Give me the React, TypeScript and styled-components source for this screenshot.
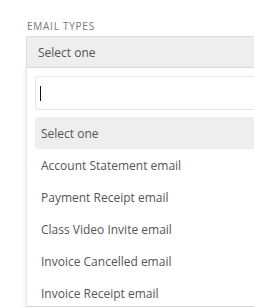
import styled, { createGlobalStyle } from 'styled-components';

/* —— tokens —— */
const txtMain = '#555';
const txtLabel = '#777';
const line = '#dcdcdc';
const fill = '#eeeeee';

const Global = createGlobalStyle`
  html, body {
    margin: 0;
    background: #fff;
    overflow: hidden;
  }
  body {
    font-family: "Open Sans", "Liberation Sans", sans-serif;
  }
`;

const options = [
  'Select one',
  'Account Statement email',
  'Payment Receipt email',
  'Class Video Invite email',
  'Invoice Cancelled email',
  'Invoice Receipt email',
];

/* —— field shell (runs off the right edge, like the crop) —— */
const Field = styled.div`
  padding: 20px 0 0 26px;
`;

const Label = styled.div`
  font-size: 10px;
  line-height: 12px;
  letter-spacing: 0.75px;
  text-transform: uppercase;
  color: ${txtLabel};
  padding-left: 1px;
  margin-bottom: 4px;
`;

const Trigger = styled.div`
  box-sizing: border-box;
  height: 32px;
  display: flex;
  align-items: center;
  padding-left: 11px;
  background: ${fill};
  border: 1px solid ${line};
  border-right: none;
  border-radius: 2px 0 0 0;
  font-size: 12px;
  color: ${txtMain};
`;

/* —— dropdown —— */
const Panel = styled.div`
  box-sizing: border-box;
  height: 239px;
  padding: 8px 0 0 8px;
  background: #fff;
  border-left: 1px solid #e8e8e8;
  border-bottom: 1px solid #d8d8d8;
  box-shadow: -2px 0 3px rgba(0, 0, 0, 0.06);
  overflow: hidden;
`;

const Search = styled.div`
  box-sizing: border-box;
  height: 34px;
  border: 1px solid #e6e6e6;
  border-right: none;
  border-radius: 3px 0 0 3px;
  display: flex;
  align-items: center;
  padding-left: 4px;
  margin-bottom: 7px;
`;

const Caret = styled.span`
  width: 1px;
  height: 15px;
  background: #111;
`;

const List = styled.ul`
  list-style: none;
  margin: 0;
  padding: 0;
`;

const Option = styled.li<{ $active?: boolean }>`
  height: 32px;
  display: flex;
  align-items: center;
  padding-left: 6px;
  border-radius: 4px 0 0 4px;
  background: ${(p) => (p.$active ? fill : 'transparent')};
  font-size: 12px;
  color: ${txtMain};
`;

export default function App() {
  return (
    <>
      <Global />
      <Field>
        <Label>Email Types</Label>
        <Trigger>Select one</Trigger>
        <Panel>
          <Search>
            <Caret />
          </Search>
          <List>
            {options.map((o, i) => (
              <Option key={o} $active={i === 0}>
                {o}
              </Option>
            ))}
          </List>
        </Panel>
      </Field>
    </>
  );
}
